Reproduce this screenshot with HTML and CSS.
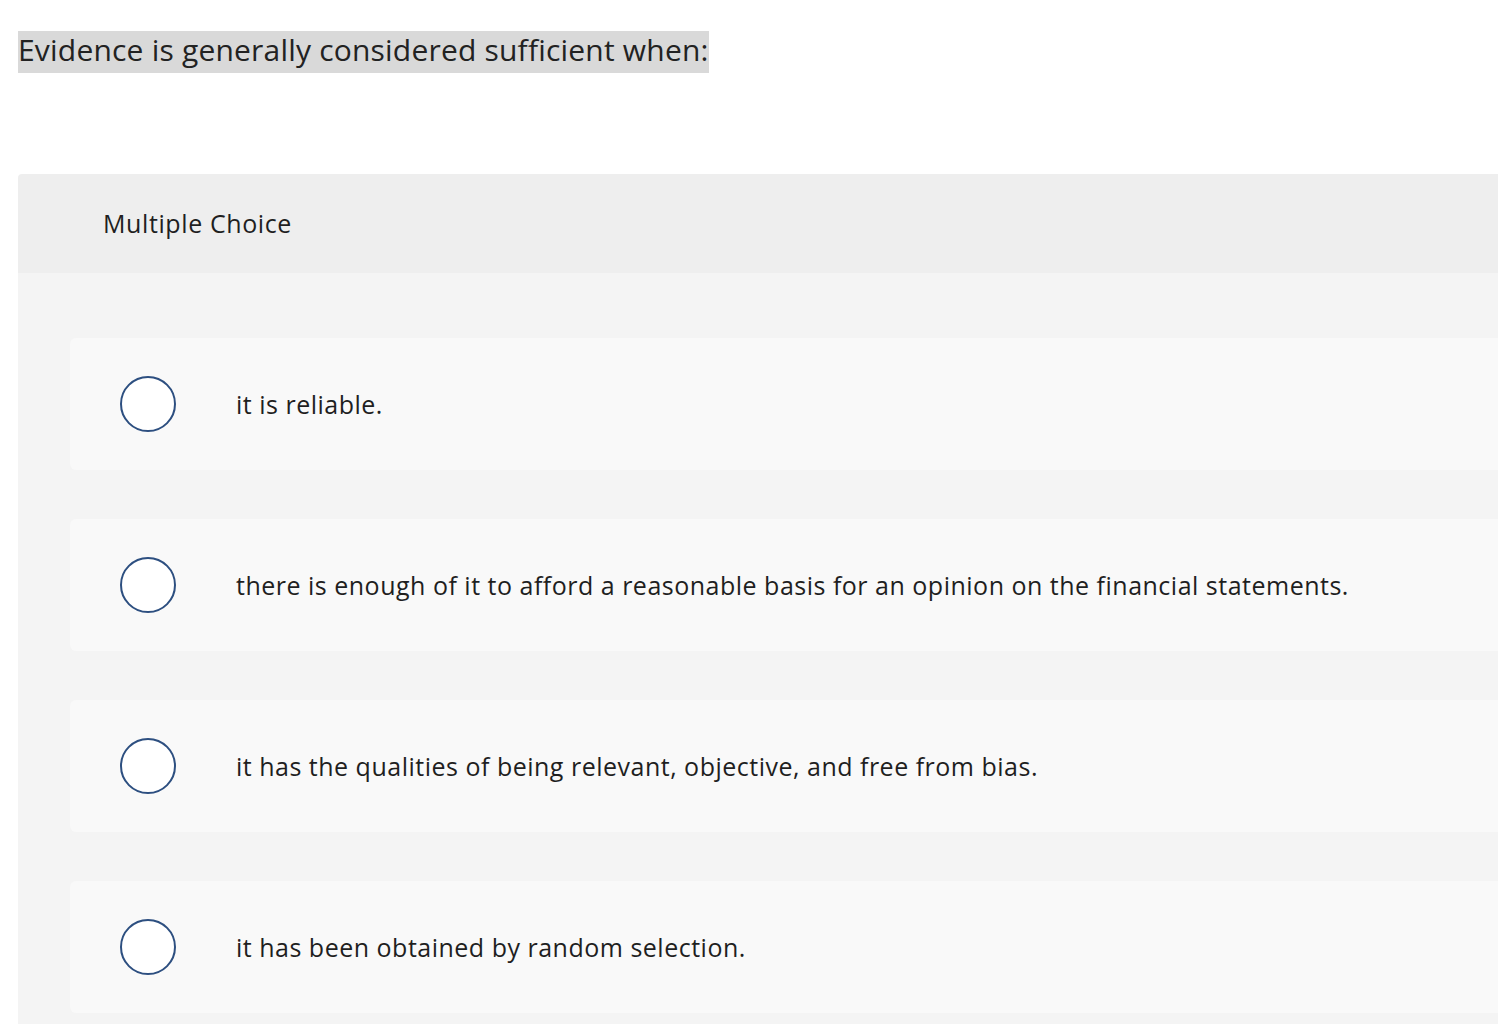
FILE: index.html
```html
<!DOCTYPE html>
<html lang="en">
<head>
<meta charset="utf-8">
<title>Multiple Choice</title>
<link rel="stylesheet" href="styles.css">
</head>
<body>
<div class="page">
  <p class="prompt"><span class="prompt-text">Evidence is generally considered sufficient when:</span></p>
  <section class="card">
    <header class="card-head">Multiple Choice</header>
    <div class="card-body">
      <label class="option"><span class="radio"></span><span class="opt-text">it is reliable.</span></label>
      <label class="option"><span class="radio"></span><span class="opt-text">there is enough of it to afford a reasonable basis for an opinion on the financial statements.</span></label>
      <label class="option"><span class="radio"></span><span class="opt-text">it has the qualities of being relevant, objective, and free from bias.</span></label>
      <label class="option"><span class="radio"></span><span class="opt-text">it has been obtained by random selection.</span></label>
    </div>
  </section>
</div>
</body>
</html>
```
FILE: styles.css
```css
html, body {
  margin: 0;
  padding: 0;
  background: #ffffff;
  overflow: hidden;
}
body {
  font-family: "Open Sans", "Noto Sans", "Liberation Sans", sans-serif;
  font-variant-ligatures: none;
  color: #222222;
}
.page {
  padding: 31px 0 0 18px;
}
.prompt {
  margin: 0;
  font-size: 30px;
  line-height: 38px;
  height: 42px;
  letter-spacing: 0.2px;
}
.prompt-text {
  display: inline-block;
  padding-bottom: 4px;
  background: #d9d9d9;
}
.card {
  margin-top: 101px;
  width: 1520px;
  border-radius: 4px 0 0 0;
  overflow: hidden;
}
.card-head {
  background: #eeeeee;
  height: 99px;
  display: flex;
  align-items: center;
  padding-left: 85px;
  padding-bottom: 1px;
  box-sizing: border-box;
  font-size: 25px;
  letter-spacing: 0.6px;
  color: #1f1f1f;
}
.card-body {
  background: #f4f4f4;
  padding: 65px 0 40px 52px;
  display: flex;
  flex-direction: column;
  gap: 49px;
}
.option {
  background: #f9f9f9;
  border-radius: 6px 0 0 6px;
  height: 132px;
  display: flex;
  align-items: center;
  padding-left: 50px;
}
.radio {
  width: 52px;
  height: 52px;
  border: 2px solid #2d4f80;
  border-radius: 50%;
  background: #ffffff;
  flex: none;
}
.opt-text {
  margin-left: 60px;
  font-size: 25px;
  letter-spacing: 0.5px;
  color: #1f1f1f;
}
```
